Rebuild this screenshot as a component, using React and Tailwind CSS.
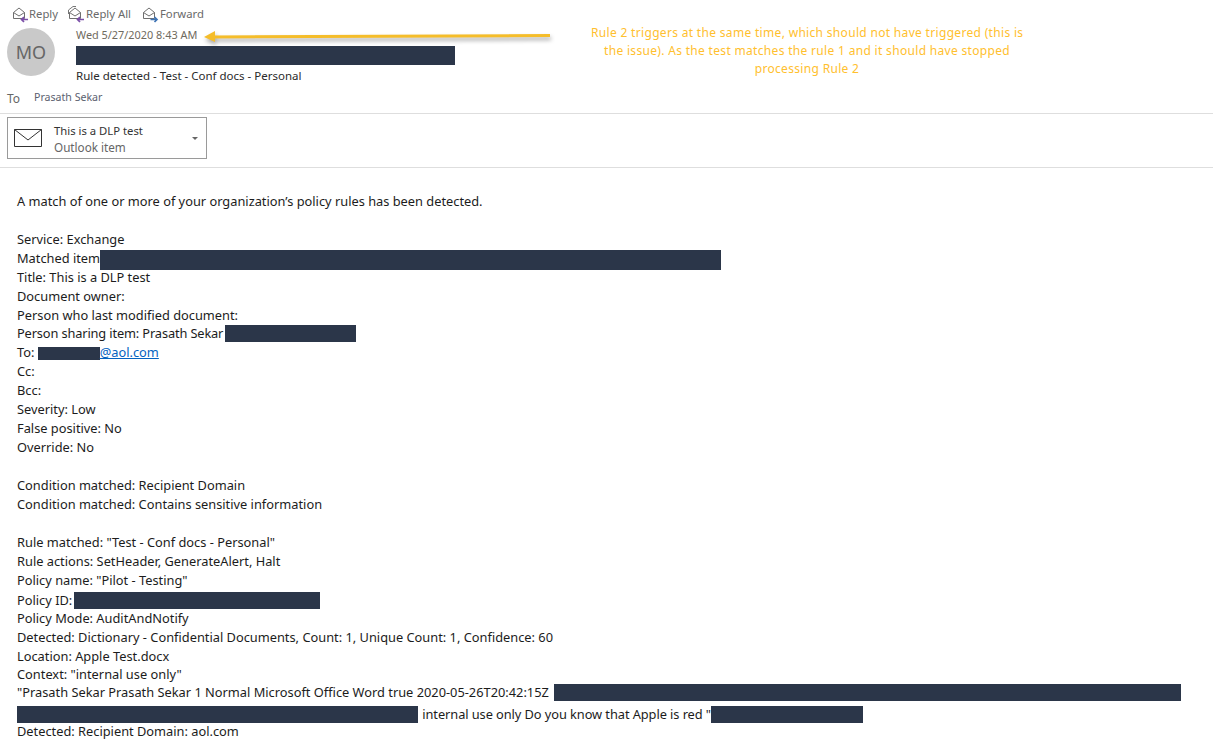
const NAVY = "bg-[#2b3649]";

function Redact({ className }) {
    return <span className={`inline-block align-top ${NAVY} ${className}`} />;
}

function ActionIcon({ arrow, double }) {
    return (
        <svg width="18" height="18" viewBox="0 0 18 18" fill="none" className="shrink-0">
            {double && <path d="M1.5 9V5L6 1.5h3" stroke="#777" strokeWidth="1" />}
            <path d="M2.5 7.5 8 3l5.5 4.5v6h-11z" stroke="#6f6f6f" strokeWidth="1" fill="#fff" />
            <path d="M2.5 7.5 8 11l5.5-3.5" stroke="#6f6f6f" strokeWidth="1" />
            {arrow === "left" ? (
                <path d="M17 14.5H10.5M13 12 10.5 14.5 13 17" stroke="#7b4fa8" strokeWidth="1.7" />
            ) : (
                <path d="M9.5 14.5H16M13.5 12 16 14.5 13.5 17" stroke="#3f74b5" strokeWidth="1.7" />
            )}
        </svg>
    );
}

function Line({ children, className = "h-[18.93px]" }) {
    return <div className={`leading-[18.93px] whitespace-nowrap ${className}`}>{children}</div>;
}

function App() {
    return (
        <div className="relative w-[1213px] h-[754px] overflow-hidden bg-white text-[12.82px] text-[#1c1c1c] font-['Noto_Sans','Open_Sans',sans-serif]">
            <div className="flex items-center h-[28px] pl-[11px] text-[11.3px] text-[#6a6a6a]">
                <span className="flex items-center w-[56px]"><ActionIcon arrow="left" />Reply</span>
                <span className="flex items-center gap-[1px] w-[74px]"><ActionIcon arrow="left" double />Reply All</span>
                <span className="flex items-center gap-[1px]"><ActionIcon arrow="right" />Forward</span>
            </div>

            <div className="flex h-[56px] pl-[7px]">
                <div className="w-[48px] h-[48px] rounded-full bg-[#c9c9c9] flex items-center justify-center text-[18px] text-[#666]">MO</div>
                <div className="ml-[21px] w-[379px]">
                    <div className="h-[18px] leading-[13px] text-[10.9px] text-[#6f6a60]">Wed 5/27/2020 8:43 AM</div>
                    <div className={`h-[19px] ${NAVY}`} />
                    <div className="h-[19px] leading-[21px] text-[11.5px] text-[#2a2a2a]">Rule detected - Test - Conf docs - Personal</div>
                </div>
                <div className="ml-[136px] -mt-[4px] w-[432px] text-center text-[12px] leading-[18px] tracking-[0.32px] text-[#ffc02e] whitespace-nowrap">
                    <div>Rule 2 triggers at the same time, which should not have triggered (this is</div>
                    <div>the issue). As the test matches the rule 1 and it should have stopped</div>
                    <div>processing Rule 2</div>
                </div>
            </div>

            <div className="flex items-center h-[30px] pl-[7px] border-b border-[#dedede] text-[10.6px] text-[#666]">
                <span className="text-[12px] w-[27px]">To</span>
                <span className="text-[#5b6170] -mt-[2px]">Prasath Sekar</span>
            </div>

            <div className="h-[54px] border-b border-[#dedede] pl-[7px] pt-[3px]">
                <div className="flex items-center w-[200px] h-[42px] border border-[#9a9a9a] pl-[6px] text-[11.3px] text-[#444]">
                    <svg width="28" height="18" viewBox="0 0 28 18" fill="none" className="shrink-0">
                        <path d="M.5.5h27v17H.5z" stroke="#333" fill="#fff" />
                        <path d="M.5.5 14 11 27.5.5" stroke="#333" />
                    </svg>
                    <div className="ml-[12px] mt-[1px] leading-[16px] w-[138px]">
                        <div className="text-[#333]">This is a DLP test</div>
                        <div className="text-[#666] text-[11.7px]">Outlook item</div>
                    </div>
                    <span className="w-0 h-0 border-x-[3px] border-x-transparent border-t-[3px] border-t-[#666]" />
                </div>
            </div>

            <div className="pl-[17px] pt-[24px]">
                <Line>A match of one or more of your organization’s policy rules has been detected.</Line>
                <Line />
                <Line>Service: Exchange</Line>
                <Line>Matched item<Redact className="w-[621px] h-[20px] mt-[1px]" /></Line>
                <Line>Title: This is a DLP test</Line>
                <Line>Document owner:</Line>
                <Line>Person who last modified document:</Line>
                <Line className="h-[18.93px] tracking-[-0.14px]">Person sharing item: Prasath Sekar<Redact className="w-[131px] h-[17px] mt-[1px] ml-[2px]" /></Line>
                <Line>To: <Redact className="w-[62px] h-[13px] mt-[4px]" /><span className="text-[#0563c1] underline">@aol.com</span></Line>
                <Line>Cc:</Line>
                <Line>Bcc:</Line>
                <Line>Severity: Low</Line>
                <Line>False positive: No</Line>
                <Line>Override: No</Line>
                <Line />
                <Line>Condition matched: Recipient Domain</Line>
                <Line>Condition matched: Contains sensitive information</Line>
                <Line />
                <Line>Rule matched: "Test - Conf docs - Personal"</Line>
                <Line className="h-[19.9px]">Rule actions: SetHeader, GenerateAlert, Halt</Line>
                <Line className="h-[19.5px]">Policy name: "Pilot - Testing"</Line>
                <Line className="h-[18px]">Policy ID:<Redact className="w-[246px] h-[17px] mt-[1px] ml-[2px]" /></Line>
                <Line>Policy Mode: AuditAndNotify</Line>
                <Line>Detected: Dictionary - Confidential Documents, Count: 1, Unique Count: 1, Confidence: 60</Line>
                <Line className="h-[18px]">Location: Apple Test.docx</Line>
                <Line className="h-[18px]">Context: "internal use only"</Line>
                <Line className="h-[22px]">"Prasath Sekar Prasath Sekar 1 Normal Microsoft Office Word true 2020-05-26T20:42:15Z<Redact className="w-[627px] h-[17px] mt-[1px] ml-[5px]" /></Line>
                <Line className="h-[17px] tracking-[-0.07px]">
                    <Redact className="w-[401px] h-[17px] mt-[1px] mr-[1px]" /> internal use only Do you know that Apple is red "<Redact className="w-[152px] h-[17px] mt-[1px]" />
                </Line>
                <Line>Detected: Recipient Domain: aol.com</Line>
            </div>

            {/* annotation arrow over the header */}
            <svg width="360" height="24" viewBox="0 0 360 24" className="absolute left-[200px] top-[26px] drop-shadow-[1px_3px_2px_rgba(0,0,0,0.35)]">
                <path d="M10 9.5 350 8v3L10 12.5z" fill="#f5bd2a" />
                <path d="M4 11l11-6v11z" fill="#f5bd2a" />
            </svg>
        </div>
    );
}

export default App;
